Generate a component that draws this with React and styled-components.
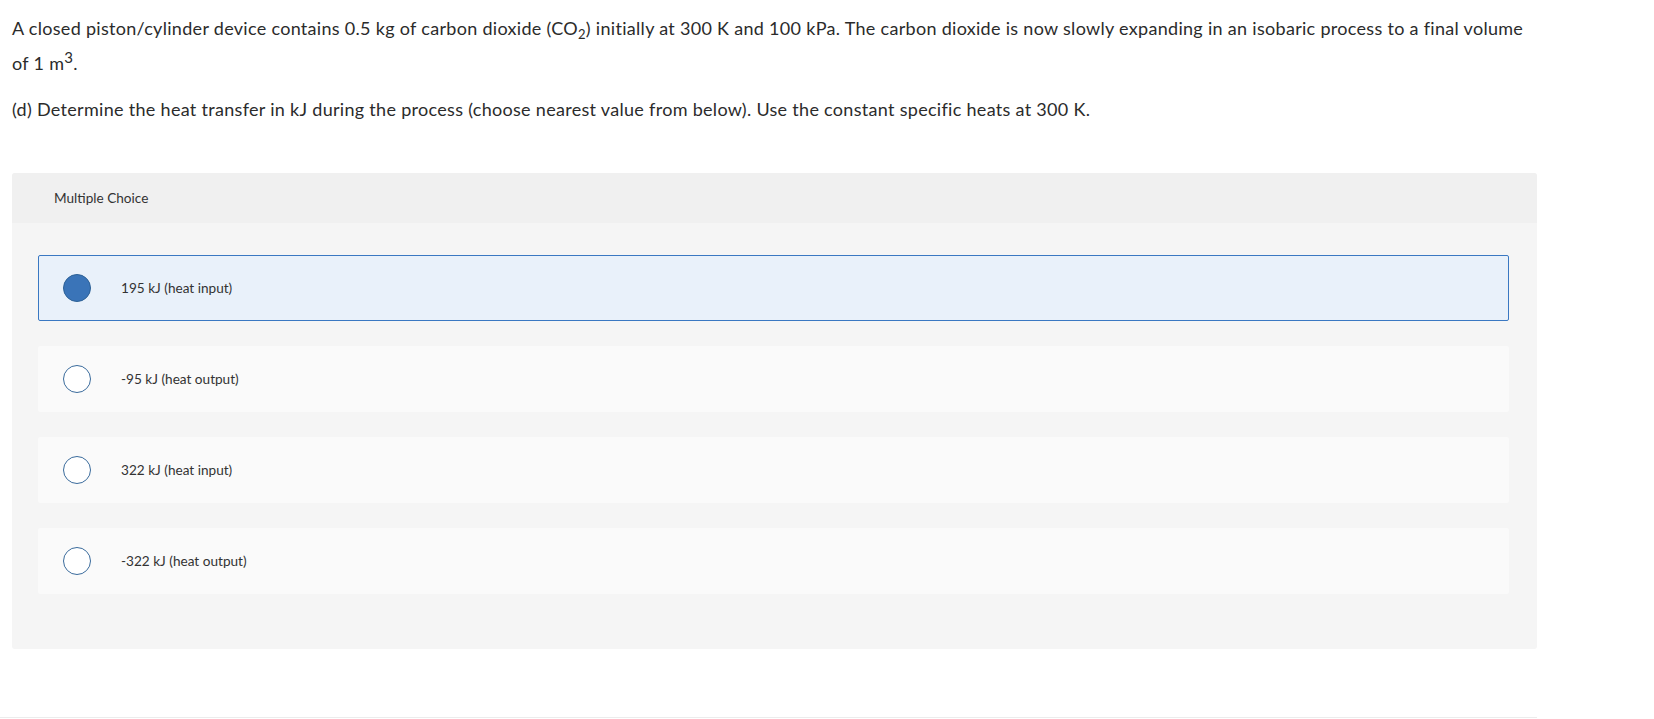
import React from "react";
import styled, { createGlobalStyle } from "styled-components";

const GlobalStyle = createGlobalStyle`
  html, body {
    margin: 0;
    padding: 0;
    background: #ffffff;
  }
  body {
    font-family: Lato, "Open Sans", Arial, sans-serif;
    color: #333333;
  }
`;

const Page = styled.main`
  width: 1537px;
  min-height: 718px;
  padding: 11px 0 0 12px;
  box-sizing: border-box;
  border-bottom: 1px solid #ececec;
`;

const Question = styled.p`
  margin: 0 0 11px;
  font-size: 18px;
  letter-spacing: 0.3px;
  line-height: 35px;
  color: #2b2b2b;
`;

const Sub = styled.span`
  display: inline-block;
  font-size: 13px;
  line-height: 1;
  position: relative;
  top: 4px;
`;

const Sup = styled.span`
  display: inline-block;
  font-size: 15px;
  line-height: 1;
  position: relative;
  top: -7px;
`;

const Panel = styled.section`
  margin-top: 46px;
  border-radius: 3px;
  background: #f5f5f5;
  overflow: hidden;
`;

const PanelHeader = styled.header`
  height: 50px;
  display: flex;
  align-items: center;
  padding-left: 42px;
  background: #f0f0f0;
  font-size: 13.6px;
  color: #333;
`;

const OptionList = styled.div`
  display: flex;
  flex-direction: column;
  gap: 25px;
  padding: 32px 28px 55px 26px;
`;

const Option = styled.label`
  height: 66px;
  box-sizing: border-box;
  display: flex;
  align-items: center;
  border-radius: 2px;
  border: 1px solid ${(p) => (p.$selected ? "#3a78c2" : "transparent")};
  background: ${(p) => (p.$selected ? "#e9f1fa" : "#fafafa")};
  cursor: pointer;
`;

const Radio = styled.span`
  width: 28px;
  height: 28px;
  margin-left: 24px;
  box-sizing: border-box;
  border-radius: 50%;
  border: 1.5px solid ${(p) => (p.$selected ? "#2d6196" : "#3a6b9c")};
  background: ${(p) => (p.$selected ? "#3a74b8" : "#ffffff")};
  flex-shrink: 0;
`;

const OptionText = styled.span`
  margin-left: 30px;
  font-size: 13.6px;
  color: #333;
`;

const options = [
  "195 kJ (heat input)",
  "-95 kJ (heat output)",
  "322 kJ (heat input)",
  "-322 kJ (heat output)",
];

export default function App() {
  const selected = 0;
  return (
    <>
      <GlobalStyle />
      <Page>
        <Question>
          A closed piston/cylinder device contains 0.5 kg of carbon dioxide (CO
          <Sub>2</Sub>) initially at 300 K and 100 kPa. The carbon dioxide is
          now slowly expanding in an isobaric process to a final volume of
          1&nbsp;m<Sup>3</Sup>.
        </Question>
        <Question>
          (d) Determine the heat transfer in kJ during the process (choose
          nearest value from below). Use the constant specific heats at 300 K.
        </Question>
        <Panel>
          <PanelHeader>Multiple Choice</PanelHeader>
          <OptionList>
            {options.map((text, i) => (
              <Option key={text} $selected={i === selected}>
                <Radio $selected={i === selected} />
                <OptionText>{text}</OptionText>
              </Option>
            ))}
          </OptionList>
        </Panel>
      </Page>
    </>
  );
}
